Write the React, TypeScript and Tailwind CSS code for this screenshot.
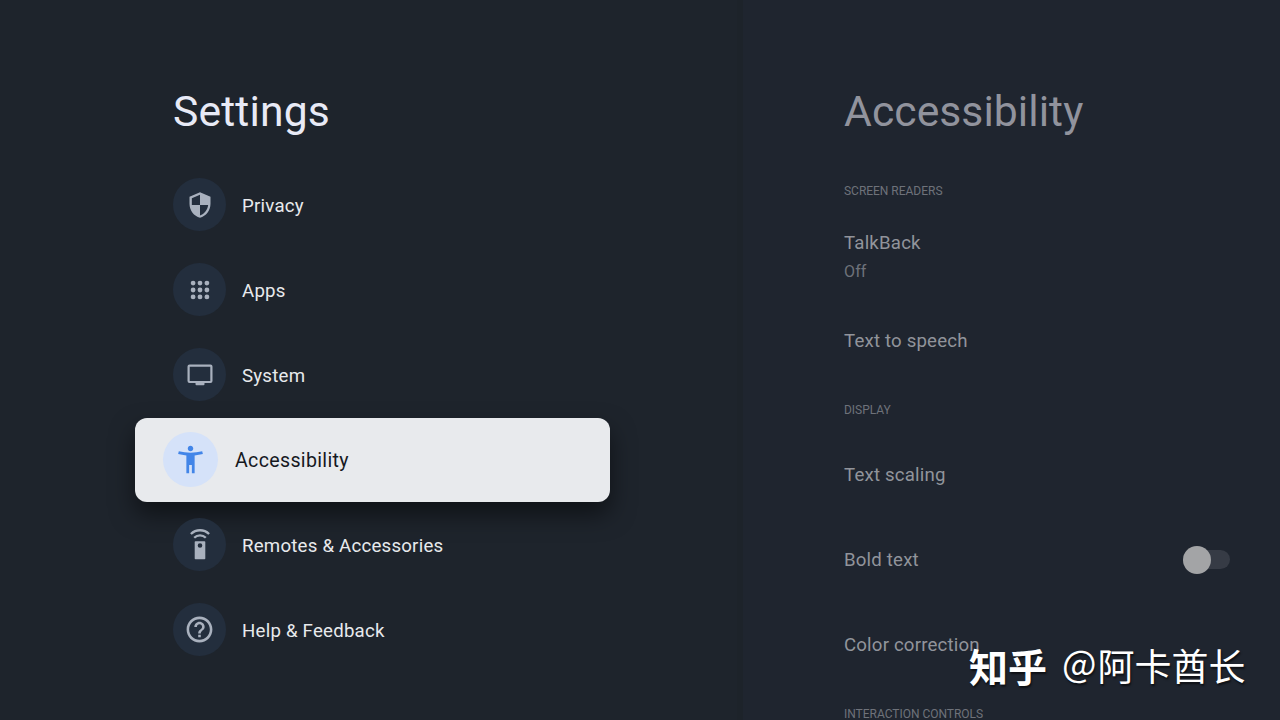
import type { ReactNode } from "react";

const icons: Record<string, ReactNode> = {
  privacy: (
    <svg viewBox="0 0 24 24" className="size-[28px] fill-[#a9b1be]">
      <path d="M12 1L3 5v6c0 5.55 3.84 10.74 9 12 5.16-1.26 9-6.45 9-12V5l-9-4zm0 10.99h7c-.53 4.12-3.28 7.79-7 8.94V12H5V6.3l7-3.11v8.8z" />
    </svg>
  ),
  apps: (
    <svg viewBox="0 0 20 20" className="size-[20px] fill-[#a9b1be]">
      {[3.1, 10, 16.9].map((y) => [3.1, 10, 16.9].map((x) => <circle key={`${x}-${y}`} cx={x} cy={y} r="2.4" />))}
    </svg>
  ),
  system: (
    <svg viewBox="0 0 26 22" className="h-[22px] w-[26px] fill-[#a9b1be]">
      <path fillRule="evenodd" d="M2.5 0.5h21a2 2 0 0 1 2 2v14.6a2 2 0 0 1-2 2h-21a2 2 0 0 1-2-2V2.5a2 2 0 0 1 2-2zM2.700 2.700v14.200h20.600V2.700z" />
      <path d="M8.500 18h9v2.200a1 1 0 0 1-1 1h-7a1 1 0 0 1-1-1z" />
    </svg>
  ),
  accessibility: (
    <svg viewBox="0 0 24 24" className="size-[33px] fill-[#4285e8]">
      <path d="M20.5 6c-2.61.7-5.67 1-8.5 1s-5.89-.3-8.5-1L3 8c1.86.5 4 .83 6 1v13h2v-6h2v6h2V9c2-.17 4.14-.5 6-1l-.5-2zM12 6c1.1 0 2-.9 2-2s-.9-2-2-2-2 .9-2 2 .9 2 2 2z" />
    </svg>
  ),
  remote: (
    <svg viewBox="0 0 22 32" className="h-[32px] w-[22px] fill-[#a9b1be]">
      <path fillRule="evenodd" d="M6.500 12.300h9a0.800 0.800 0 0 1 .8.8v16.400a.8.8 0 0 1-.8.8h-9a.8.8 0 0 1-.8-.8v-16.400a.8.8 0 0 1 .8-.8zM11 14.200a2.300 2.300 0 1 0 0 4.600a2.300 2.300 0 0 0 0-4.600z" />
      <path d="M1.900 5a12.900 12.900 0 0 1 18.200 0M5.200 8.700a8.200 8.200 0 0 1 11.600 0" fill="none" stroke="#a9b1be" strokeWidth="2.300" />
    </svg>
  ),
  help: (
    <svg viewBox="0 0 24 24" className="size-[31px] fill-[#a9b1be]">
      <path d="M11 18h2v-2h-2v2zm1-16C6.480 2 2 6.480 2 12s4.480 10 10 10 10-4.480 10-10S17.520 2 12 2zm0 18c-4.410 0-8-3.590-8-8s3.590-8 8-8 8 3.590 8 8-3.590 8-8 8zm0-14c-2.210 0-4 1.790-4 4h2c0-1.100.9-2 2-2s2 .9 2 2c0 2-3 1.750-3 5h2c0-2.250 3-2.500 3-5 0-2.210-1.790-4-4-4z" />
    </svg>
  ),
};

function Row({ icon, label }: { icon: string; label: string }) {
  return (
    <li className="flex h-[85px] items-center pl-[173px]">
      <span className="flex size-[53px] items-center justify-center rounded-full bg-[#232e3d]">{icons[icon]}</span>
      <span className="ml-4 pt-[3px] text-[18.67px] tracking-[0.22px] text-[#e8eaed]">{label}</span>
    </li>
  );
}

function SelectedRow({ icon, label }: { icon: string; label: string }) {
  return (
    <li className="mt-px ml-[135px] flex h-[84px] w-[475px] items-center rounded-[12px] bg-[#e8eaed] pl-7 shadow-[0_12px_24px_rgba(0,0,0,0.5)]">
      <span className="mb-px flex size-[55px] items-center justify-center rounded-full bg-[#d5e2f9]">{icons[icon]}</span>
      <span className="ml-[17px] pt-[2px] text-[19.6px] tracking-[0.32px] text-[#16191f]">{label}</span>
    </li>
  );
}

function Heading({ children }: { children: string }) {
  return <h2 className="text-[12px] leading-4 tracking-[-0.02px] text-[#6e727a]">{children}</h2>;
}

function Item({ children }: { children: ReactNode }) {
  return <div className="flex h-[85px] items-center justify-between text-[18.67px] tracking-[0.17px] text-[#91949b]">{children}</div>;
}

export default function App() {
  return (
    <div className="relative flex h-[720px] w-[1280px] overflow-hidden bg-[#1e242c] font-['Roboto',sans-serif]">
      <main className="w-[737px] shrink-0 pt-[84px]">
        <h1 className="h-[78px] pl-[173px] text-[42.67px] leading-[54px] tracking-[0.15px] text-[#e8eaf6]">Settings</h1>
        <ul>
          <Row icon="privacy" label="Privacy" />
          <Row icon="apps" label="Apps" />
          <Row icon="system" label="System" />
          <SelectedRow icon="accessibility" label="Accessibility" />
          <Row icon="remote" label="Remotes &amp; Accessories" />
          <Row icon="help" label="Help &amp; Feedback" />
        </ul>
      </main>
      <aside className="flex-1 border-l-[6px] border-[#1d232a] bg-[#1f252f] pt-[84px] pr-[50px] pl-[101px]">
        <h1 className="h-[99px] text-[42.67px] leading-[54px] tracking-[0.05px] text-[#91939d]">Accessibility</h1>
        <Heading>SCREEN READERS</Heading>
        <div className="h-[99px] pt-8">
          <p className="text-[18.67px] leading-6 tracking-[0.19px] text-[#91949b]">TalkBack</p>
          <p className="mt-[7px] text-[16px] leading-5 tracking-[0.15px] text-[#6e727a]">Off</p>
        </div>
        <Item>Text to speech</Item>
        <div className="pt-[19px]">
          <Heading>DISPLAY</Heading>
        </div>
        <div className="pt-[14px]">
          <Item>Text scaling</Item>
          <Item>
            <span>Bold text</span>
            <span className="flex h-[27px] w-[47px] items-center">
              <span className="z-10 size-[28px] shrink-0 rounded-full bg-[#a3a4a6]" />
              <span className="-ml-[14px] h-[19px] w-[33px] rounded-r-full bg-[#363b45]" />
            </span>
          </Item>
          <Item>Color correction</Item>
        </div>
        <div className="pt-[19px]">
          <Heading>INTERACTION CONTROLS</Heading>
        </div>
      </aside>
      <div className="absolute top-[638px] left-[969px] z-20 flex items-center font-['Noto_Sans_CJK_SC',sans-serif] leading-[54px] whitespace-nowrap text-white [text-shadow:1px_2px_2px_rgba(0,0,0,0.6)]">
        <span className="w-[93px] text-[39px] font-bold">知乎</span>
        <span className="-mt-[7px] text-[36.5px]">@</span>
        <span className="ml-px text-[37px]">阿卡酋长</span>
      </div>
    </div>
  );
}
